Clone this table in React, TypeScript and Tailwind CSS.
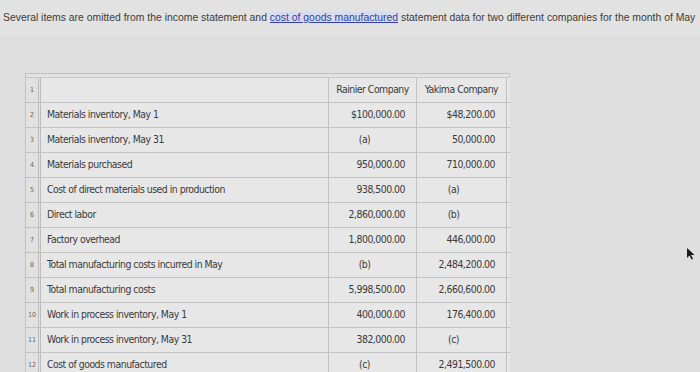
import React from 'react';

type Row = { n: number; label: string; rainier: string; yakima: string };

const rows: Row[] = [
  { n: 1, label: '', rainier: 'Rainier Company', yakima: 'Yakima Company' },
  { n: 2, label: 'Materials inventory, May 1', rainier: '$100,000.00', yakima: '$48,200.00' },
  { n: 3, label: 'Materials inventory, May 31', rainier: '(a)', yakima: '50,000.00' },
  { n: 4, label: 'Materials purchased', rainier: '950,000.00', yakima: '710,000.00' },
  { n: 5, label: 'Cost of direct materials used in production', rainier: '938,500.00', yakima: '(a)' },
  { n: 6, label: 'Direct labor', rainier: '2,860,000.00', yakima: '(b)' },
  { n: 7, label: 'Factory overhead', rainier: '1,800,000.00', yakima: '446,000.00' },
  { n: 8, label: 'Total manufacturing costs incurred in May', rainier: '(b)', yakima: '2,484,200.00' },
  { n: 9, label: 'Total manufacturing costs', rainier: '5,998,500.00', yakima: '2,660,600.00' },
  { n: 10, label: 'Work in process inventory, May 1', rainier: '400,000.00', yakima: '176,400.00' },
  { n: 11, label: 'Work in process inventory, May 31', rainier: '382,000.00', yakima: '(c)' },
  { n: 12, label: 'Cost of goods manufactured', rainier: '(c)', yakima: '2,491,500.00' },
];

const isBlank = (v: string) => v.startsWith('(');

function ValueCell({ value, header, width }: { value: string; header: boolean; width: string }) {
  const blank = isBlank(value);
  return (
    <div
      className={`${width} whitespace-nowrap border-r border-[#c2c2c2] flex items-center ${
        header ? 'justify-center' : blank ? 'justify-center pr-4' : 'justify-end pr-[11px]'
      }`}
    >
      {value}
    </div>
  );
}

export default function App() {
  return (
    <main className="relative w-[700px] h-[372px] overflow-hidden bg-[#dedede] text-[#3a3a3a]">
      {/* Prompt text */}
      <div className="h-[36px] pl-[3px] pt-[10px] bg-[#e2e2e2] whitespace-nowrap text-[10.4px] text-[#3c3c3c] font-['Liberation_Sans',Arial,sans-serif]">
        Several items are omitted from the income statement and{' '}
        <span className="text-[#3340a8] underline bg-[#d6dcef]">cost of goods manufactured</span> statement data for two
        different companies for the month of May
      </div>

      {/* Data table */}
      <div className="mt-[37px] ml-[25px] w-[485px] border-l border-t border-[#c2c2c2] bg-[#e7e7e7] font-['DejaVu_Sans_Condensed','Liberation_Sans_Narrow','Roboto',sans-serif] text-[10.4px] tracking-[-0.5px]">
        <div className="h-[4px] border-b border-r border-[#c8c8c8] bg-[#e2e2e2]" />
        {rows.map((r) => (
          <div key={r.n} className="flex h-[25px] border-b border-[#c2c2c2]">
            <div className="w-[15px] shrink-0 flex items-center justify-center text-[7px] tracking-normal text-[#666] bg-[#e1e1e1] border-r-[3px] border-double border-[#bdbdbd]">
              {r.n}
            </div>
            <div className="w-[288px] shrink-0 whitespace-nowrap border-r border-[#c2c2c2] flex items-center pl-[6px]">
              {r.label}
            </div>
            <ValueCell value={r.rainier} header={r.n === 1} width="w-[88px] shrink-0" />
            <ValueCell value={r.yakima} header={r.n === 1} width="w-[90px] shrink-0" />
          </div>
        ))}
      </div>

      {/* Mouse pointer */}
      <svg className="absolute left-[686px] top-[247px]" width="10" height="14" viewBox="0 0 10 14">
        <path d="M1 1 L1 11 L3.5 8.5 L5.5 12.5 L7 11.8 L5 8 L8.5 8 Z" fill="#1a1a1a" />
      </svg>
    </main>
  );
}
